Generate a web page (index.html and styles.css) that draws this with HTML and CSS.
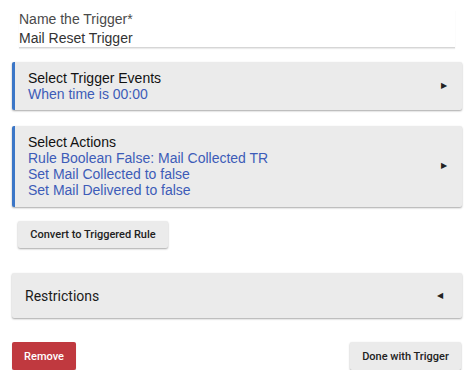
FILE: index.html
```html
<!DOCTYPE html>
<html>
<head>
<meta charset="utf-8">
<link rel="stylesheet" href="styles.css">
</head>
<body>
<div class="page">
  <div class="field">
    <div class="field-label">Name the Trigger*</div>
    <div class="field-value">Mail Reset Trigger</div>
  </div>

  <div class="card card-accent card-events">
    <div class="card-text">
      <div class="card-title">Select Trigger Events</div>
      <div class="card-line">When time is 00:00</div>
    </div>
    <span class="arrow">&#9654;</span>
  </div>

  <div class="card card-accent card-actions">
    <div class="card-text">
      <div class="card-title">Select Actions</div>
      <div class="card-line">Rule Boolean False: Mail Collected TR</div>
      <div class="card-line">Set Mail Collected to false</div>
      <div class="card-line">Set Mail Delivered to false</div>
    </div>
    <span class="arrow">&#9654;</span>
  </div>

  <div class="convert-row">
    <button class="btn btn-grey btn-convert">Convert to Triggered Rule</button>
  </div>

  <div class="card card-restrict">
    <div class="restrict-title">Restrictions</div>
    <span class="arrow arrow-left">&#9664;</span>
  </div>

  <div class="footer">
    <button class="btn btn-red">Remove</button>
    <button class="btn btn-grey btn-done">Done with Trigger</button>
  </div>
</div>
</body>
</html>
```

FILE: styles.css
```css
html, body {
  margin: 0;
  padding: 0;
  background: #ffffff;
}

.page {
  width: 474px;
  padding: 10px 12px 0 12px;
  box-sizing: border-box;
  font-family: "Liberation Sans", Arial, sans-serif;
}

.field {
  margin-left: 7px;
  width: 436px;
  border-bottom: 1px solid #d6d6d6;
  box-shadow: 0 1px 1px rgba(0,0,0,0.08);
  padding-bottom: 0;
}

.field-label {
  font-size: 14px;
  line-height: 18px;
  color: #4a4a4a;
}

.field-value {
  font-size: 14px;
  line-height: 18px;
  color: #333333;
  margin-top: 1px;
}

.card {
  background: #ebebeb;
  box-shadow: 0 1px 2px rgba(0,0,0,0.35);
  border-radius: 2px;
  display: flex;
  align-items: center;
  justify-content: space-between;
  width: 450px;
  box-sizing: border-box;
}

.card-accent {
  border-left: 3px solid #3b76c7;
  padding: 8px 15px 8px 13px;
}

.card-events {
  margin-top: 14px;
}

.card-actions {
  margin-top: 16px;
  padding-top: 8px;
  padding-bottom: 9px;
}

.card-title {
  font-size: 14px;
  line-height: 16px;
  color: #111111;
}

.card-line {
  font-size: 14px;
  line-height: 16px;
  color: #3d5cb8;
}

.arrow {
  font-size: 8px;
  color: #222222;
  line-height: 1;
}

.convert-row {
  margin-top: 14px;
  padding-left: 6px;
}

.btn {
  font-family: Roboto, "Liberation Sans", sans-serif;
  font-weight: 500;
  font-size: 11px;
  border: none;
  border-radius: 2px;
  height: 28px;
  padding: 0;
  cursor: pointer;
}

.btn-grey {
  background: #ebebeb;
  color: #222222;
  box-shadow: 0 1px 2px rgba(0,0,0,0.35);
}

.btn-convert {
  height: 27px;
  width: 150px;
}

.btn-red {
  background: #c0393f;
  color: #ffffff;
  width: 64px;
  box-shadow: 0 1px 1px rgba(0,0,0,0.2);
}

.btn-done {
  width: 111px;
}

.card-restrict {
  margin-top: 25px;
  height: 45px;
  padding: 0 19px 0 13px;
}

.restrict-title {
  font-family: Roboto, "Liberation Sans", sans-serif;
  font-size: 14px;
  color: #1a1a1a;
}

.footer {
  margin-top: 24px;
  width: 450px;
  display: flex;
  justify-content: space-between;
  padding-right: 1px;
  box-sizing: border-box;
}
```
